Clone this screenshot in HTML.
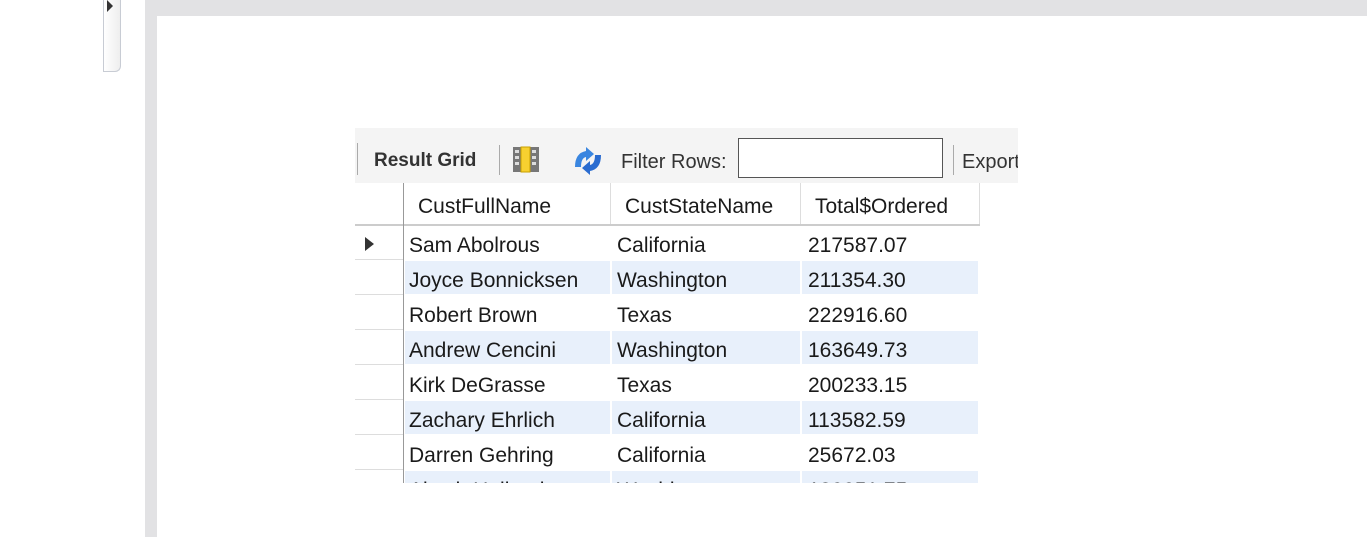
<!DOCTYPE html>
<html><head><meta charset="utf-8"><style>
body{margin:0;width:1367px;height:537px;background:#fff;position:relative;overflow:hidden;font-family:"Liberation Sans",sans-serif;}
.a{position:absolute;}
.t{font-size:21px;color:#1a1a1a;white-space:nowrap;}
</style></head><body>
<div class="a" style="left:103px;top:-5px;width:16px;height:76px;border:1px solid #c8ccd4;border-top:none;border-radius:0 0 6px 0;background:linear-gradient(90deg,#fff,#eee);"></div>
<div class="a" style="left:107px;top:0;width:0;height:0;border-top:6px solid transparent;border-bottom:6px solid transparent;border-left:6px solid #333;"></div>
<div class="a" style="left:145px;top:0;width:12px;height:537px;background:#e2e2e4;"></div>
<div class="a" style="left:157px;top:0;width:1210px;height:16px;background:#e2e2e4;"></div>

<div class="a" style="left:355px;top:128px;width:663px;height:55px;background:#f4f4f4;"></div>
<div class="a" style="left:357px;top:143px;width:1px;height:32px;background:#aaa;"></div>
<div class="a t" style="left:374px;top:150px;font-weight:bold;font-size:19px;color:#333;">Result Grid</div>
<div class="a" style="left:499px;top:145px;width:1px;height:30px;background:#aaa;"></div>
<svg class="a" style="left:512px;top:146px" width="30" height="28"><rect x="1" y="1" width="26" height="25" fill="#777"/><rect x="9" y="1" width="9" height="25" fill="#f7d030" stroke="#c9a000"/><g fill="#ddd"><rect x="3" y="4" width="4" height="3"/><rect x="3" y="10" width="4" height="3"/><rect x="3" y="16" width="4" height="3"/><rect x="20" y="4" width="4" height="3"/><rect x="20" y="10" width="4" height="3"/><rect x="20" y="16" width="4" height="3"/></g></svg>
<svg class="a" style="left:570px;top:145px" width="36" height="32"><path d="M5 22 Q5 8 16 6 L16 2 L24 9 L16 16 L16 12 Q11 13 11 22 Z" fill="#3a86e0"/><path d="M31 10 Q31 24 20 26 L20 30 L12 23 L20 16 L20 20 Q25 19 25 10 Z" fill="#2a6cd0"/></svg>
<div class="a t" style="left:621px;top:151px;font-size:20px;color:#333;">Filter Rows:</div>
<div class="a" style="left:738px;top:138px;width:203px;height:38px;border:1px solid #555;background:#fff;"></div>
<div class="a" style="left:953px;top:145px;width:1px;height:30px;background:#aaa;"></div>
<div class="a t" style="left:962px;top:151px;font-size:20px;color:#333;width:56px;overflow:hidden;">Export</div>

<div class="a" style="left:355px;top:183px;width:625px;height:300px;overflow:hidden;">
<div class="a" style="left:0;top:0;width:625px;height:41px;background:#fff;border-bottom:2px solid #ccc;"></div>
<div class="a" style="left:48px;top:0;width:1px;height:300px;background:#999;"></div>
<div class="a" style="left:255px;top:0;width:1px;height:41px;background:#ddd;"></div>
<div class="a" style="left:445px;top:0;width:1px;height:41px;background:#ddd;"></div>
<div class="a" style="left:624px;top:0;width:1px;height:41px;background:#ddd;"></div>
<div class="a t" style="left:63px;top:12px;">CustFullName</div>
<div class="a t" style="left:270px;top:12px;">CustStateName</div>
<div class="a t" style="left:460px;top:12px;">Total$Ordered</div>
<div id="rows"></div>
</div>
<script>
var d=[["Sam Abolrous","California","217587.07"],["Joyce Bonnicksen","Washington","211354.30"],["Robert Brown","Texas","222916.60"],["Andrew Cencini","Washington","163649.73"],["Kirk DeGrasse","Texas","200233.15"],["Zachary Ehrlich","California","113582.59"],["Darren Gehring","California","25672.03"],["Alstair Holland","Washington","189951.75"]];
var h="";d.forEach(function(r,i){var y=43+i*35;
if(i%2==1){h+='<div class="a" style="left:50px;top:'+y+'px;width:205px;height:33px;background:#e8f0fb"></div><div class="a" style="left:257px;top:'+y+'px;width:188px;height:33px;background:#e8f0fb"></div><div class="a" style="left:447px;top:'+y+'px;width:176px;height:33px;background:#e8f0fb"></div>';}
h+='<div class="a" style="left:0;top:'+(y+33)+'px;width:48px;height:1px;background:#ddd"></div>';
h+='<div class="a t" style="left:54px;top:'+(y+8)+'px">'+r[0]+'</div><div class="a t" style="left:262px;top:'+(y+8)+'px">'+r[1]+'</div><div class="a t" style="left:453px;top:'+(y+8)+'px">'+r[2]+'</div>';});
h+='<div class="a" style="left:10px;top:54px;width:0;height:0;border-top:7px solid transparent;border-bottom:7px solid transparent;border-left:9px solid #333"></div>';
document.getElementById("rows").innerHTML=h;
</script>
</body></html>
